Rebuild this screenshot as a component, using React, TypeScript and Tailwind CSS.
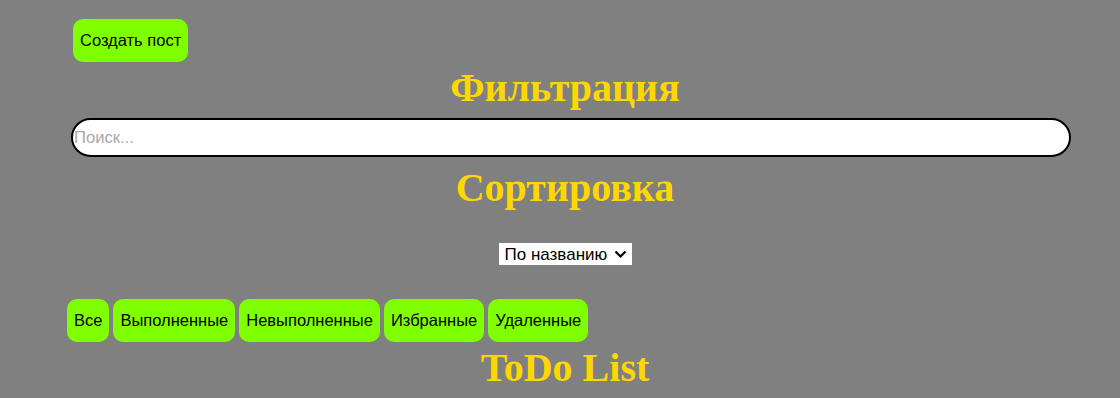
import React from "react";

const btn =
  "h-[43px] px-[7px] rounded-[10px] bg-[#7fff00] text-black text-[16.5px] leading-none";
const head =
  "text-center text-[40px] leading-[45px] font-bold text-[#ffd700] font-['Liberation_Serif','Times_New_Roman',serif]";

export default function App() {
  const filters = ["Все", "Выполненные", "Невыполненные", "Избранные", "Удаленные"];
  return (
    <div className="min-h-[398px] w-[1120px] bg-[#808080] font-['Liberation_Sans',Arial,sans-serif] overflow-hidden">
      <div className="pt-[19px] pl-[73px]">
        <button className={btn}>Создать пост</button>
      </div>
      <div className="pl-[10px]">
        <h1 className={head + " mt-[3px]"}>Фильтрация</h1>
        <div className="mt-[8px] pl-[61px]">
          <input
            placeholder="Поиск..."
            className="block w-[1000px] h-[39px] rounded-full border-2 border-black bg-white text-[16.6px] text-black placeholder:text-[#a9a9a9] px-[1px] outline-none"
          />
        </div>
        <h1 className={head + " mt-[8px]"}>Сортировка</h1>
        <div className="mt-[33px] flex justify-center">
          <div className="flex items-center h-[22px] w-[133px] bg-white pl-[6px] pr-[5px]">
            <select className="appearance-none flex-1 min-w-0 bg-white text-black text-[17px] leading-none outline-none">
              <option>По названию</option>
            </select>
            <svg width="13" height="9" viewBox="0 0 13 9" className="shrink-0">
              <path d="M1.5 1.5 L6.5 6.5 L11.5 1.5" fill="none" stroke="#000" strokeWidth="2.2" />
            </svg>
          </div>
        </div>
      </div>
      <div className="mt-[34px] pl-[67px] flex gap-[4px]">
        {filters.map((f) => (
          <button key={f} className={btn}>
            {f}
          </button>
        ))}
      </div>
      <h1 className={head + " pl-[10px] mt-[3px]"}>ToDo List</h1>
    </div>
  );
}
